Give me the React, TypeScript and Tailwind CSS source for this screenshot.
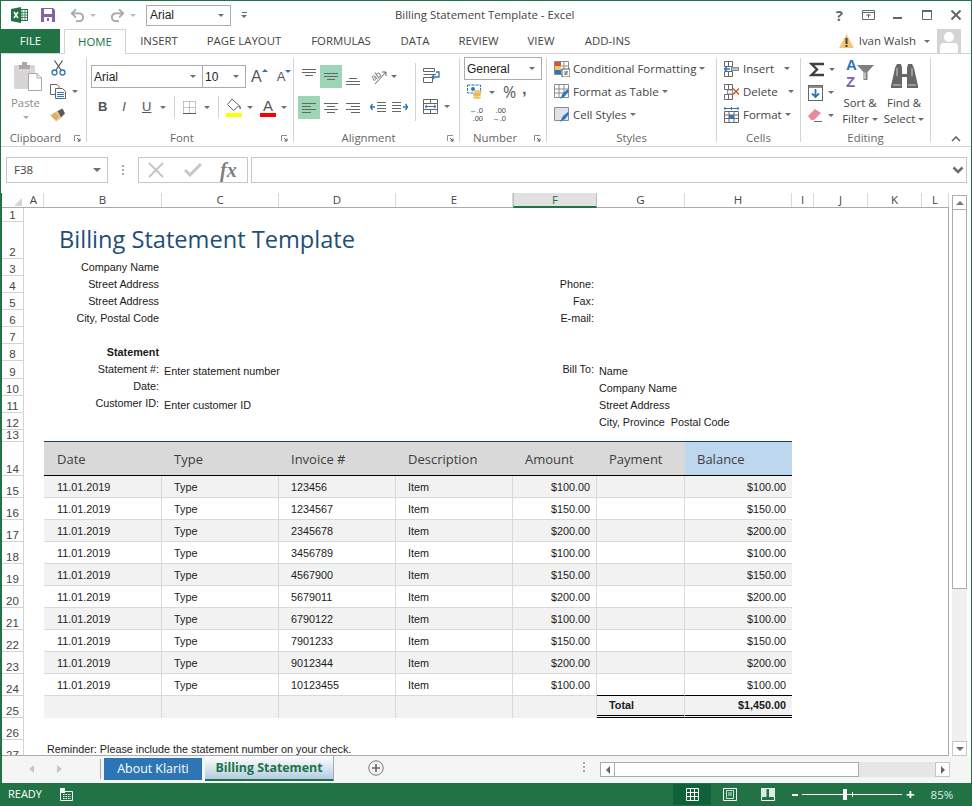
import { Redo2, Undo2 } from "lucide-react";
import type { ReactNode } from "react";

const cols =
  "grid grid-cols-[22px_20px_118px_117px_117px_117px_84px_88px_107px_22px_54px_54px_27px]";

function Caret({ className = "" }: { className?: string }) {
  return (
    <span
      className={`inline-block h-0 w-0 shrink-0 border-x-[3px] border-t-[3px] border-x-transparent border-t-[#6e6e6e] ${className}`}
    />
  );
}

function Lines({ rows, w = 14, h = 14, color = "#666" }: { rows: [number, number, number][]; w?: number; h?: number; color?: string }) {
  return (
    <svg width={w} height={h} viewBox={`0 0 ${w} ${h}`} className="shrink-0">
      {rows.map(([y, a, b]) => (
        <path key={`${y}-${a}`} d={`M${a} ${y + 0.5}H${b}`} stroke={color} />
      ))}
    </svg>
  );
}

function ExcelLogo() {
  return (
    <svg width="17" height="16" viewBox="0 0 17 16" className="shrink-0">
      <rect x="8.5" y="2.5" width="8" height="11" fill="#fff" stroke="#217346" />
      <path d="M11 2.5v11M14 2.5v11M8.5 5.5h8M8.5 8h8M8.5 10.5h8" stroke="#217346" strokeWidth="0.8" />
      <path d="M0 2L10 0V16L0 14Z" fill="#217346" />
      <path d="M3 5L7 11M7 5L3 11" stroke="#fff" strokeWidth="1.5" />
    </svg>
  );
}

function SaveIcon() {
  return (
    <svg width="14" height="14" viewBox="0 0 14 14" className="shrink-0">
      <path d="M0 0H12L14 2V14H0Z" fill="#8261ab" />
      <rect x="3" y="1" width="8" height="5" fill="#fff" />
      <rect x="3" y="9" width="8" height="5" fill="#fff" />
      <rect x="6" y="10" width="2" height="3" fill="#8261ab" />
    </svg>
  );
}

function PasteIcon() {
  return (
    <svg width="28" height="29" viewBox="0 0 28 29" className="shrink-0">
      <rect x="0" y="3" width="21" height="24" rx="1.5" fill="#d8d5d6" />
      <path d="M5 7V3H8V0H13V3H16V7Z" fill="#a9a7a8" />
      <path d="M14.5 11.5H23L27.5 16V28.5H14.5Z" fill="#fff" stroke="#a9a7a8" />
      <path d="M23 11.5V16H27.5" fill="none" stroke="#a9a7a8" />
    </svg>
  );
}

function ScissorsIcon() {
  return (
    <svg width="15" height="16" viewBox="0 0 15 16" className="shrink-0">
      <path d="M5 10L11.5 0.5M10 10L3.5 0.5" stroke="#595959" strokeWidth="1.3" />
      <circle cx="3.5" cy="12.5" r="2.5" fill="none" stroke="#2f75b5" strokeWidth="1.3" />
      <circle cx="11.5" cy="12.5" r="2.5" fill="none" stroke="#2f75b5" strokeWidth="1.3" />
    </svg>
  );
}

function CopyIcon() {
  return (
    <svg width="16" height="15" viewBox="0 0 16 15" className="shrink-0">
      <path d="M0.5 0.5H7L9 2.5V10.5H0.5Z" fill="#fff" stroke="#666" />
      <path d="M5.5 4.5H12.5L15.5 7.5V14.5H5.5Z" fill="#fff" stroke="#666" />
      <path d="M7 8.5H14M7 10.5H14M7 12.5H14" stroke="#2f75b5" />
    </svg>
  );
}

function BrushIcon() {
  return (
    <svg width="17" height="14" viewBox="0 0 17 14" className="shrink-0">
      <path d="M0 7L7 3L11 10L6 13.5Z" fill="#e9bd7c" />
      <path d="M2 8L7 11M4 6L8 9" stroke="#c9954d" />
      <path d="M7.5 3L12.5 0.5L15 5.5L11 9.5Z" fill="#595959" />
    </svg>
  );
}

function BorderIcon() {
  return (
    <svg width="13" height="13" viewBox="0 0 13 13" className="shrink-0">
      <path d="M0.5 0.5H12.5V12.5M0.5 0.5V12.5M6.5 0.5V12.5M0.5 6.5H12.5" fill="none" stroke="#8c8c8c" strokeDasharray="1 1" />
      <path d="M0 12.5H13" stroke="#595959" />
    </svg>
  );
}

function FillIcon() {
  return (
    <svg width="16" height="19" viewBox="0 0 16 19" className="shrink-0">
      <path d="M6 1L13 7.5L7.5 12.5L1.5 6.5Z" fill="#fff" stroke="#666" />
      <path d="M13 7C15 9 15.5 10 14.5 11C13.5 11.5 13 10 13 7Z" fill="#2f75b5" />
      <rect x="0" y="15" width="16" height="4" fill="#ffff00" />
    </svg>
  );
}

function OrientationIcon() {
  return (
    <svg width="19" height="18" viewBox="0 0 19 18" className="shrink-0">
      <text x="1" y="11" fontSize="9" fill="#666" transform="rotate(-35 6 8)" fontFamily="Liberation Sans">ab</text>
      <path d="M5 16L16 4M16 4H12M16 4V8" fill="none" stroke="#666" />
    </svg>
  );
}

function IndentIcon({ flip = false }: { flip?: boolean }) {
  return (
    <svg width="16" height="12" viewBox="0 0 16 12" className={`shrink-0 ${flip ? "-scale-x-100" : ""}`}>
      <path d="M7 0.5H16M7 3.5H16M7 6.5H16M7 9.5H16M0 11.5H0" stroke="#666" />
      <path d="M0 5H5M2.5 2L0.5 5L2.5 8" fill="none" stroke="#2f75b5" strokeWidth="1.4" />
    </svg>
  );
}

function WrapIcon() {
  return (
    <svg width="17" height="16" viewBox="0 0 17 16" className="shrink-0">
      <path d="M0.5 0.5H11.5V3.5H0.5ZM0.5 9.5H9.5V14.5H0.5Z" fill="#fff" stroke="#666" />
      <path d="M0.5 6.5H13" stroke="#666" />
      <path d="M13 4H16V9H9M11 7L9 9L11 11" fill="none" stroke="#2f75b5" strokeWidth="1.3" />
    </svg>
  );
}

function MergeIcon() {
  return (
    <svg width="15" height="15" viewBox="0 0 15 15" className="shrink-0">
      <path d="M0.5 0.5H14.5V14.5H0.5ZM0.5 4.5H14.5M0.5 10.5H14.5M7.5 0.5V4.5M7.5 10.5V14.5" fill="#fff" stroke="#666" />
      <path d="M2 7.5H13M4 5.8L2 7.5L4 9.2M11 5.8L13 7.5L11 9.2" fill="none" stroke="#2f75b5" />
    </svg>
  );
}

function AccountingIcon() {
  return (
    <svg width="16" height="16" viewBox="0 0 16 16" className="shrink-0">
      <rect x="0.5" y="1" width="13" height="8" fill="#fff" stroke="#2f75b5" strokeDasharray="3 1" />
      <circle cx="6" cy="5" r="2" fill="#2f75b5" />
      <ellipse cx="11" cy="7.5" rx="4" ry="1.5" fill="#f2c76e" />
      <ellipse cx="10" cy="10.5" rx="4" ry="1.5" fill="#eeb44f" />
      <ellipse cx="10" cy="13.5" rx="4" ry="1.5" fill="#f2c76e" />
    </svg>
  );
}

function StyleIcon({ kind }: { kind: "cond" | "table" | "cell" }) {
  return (
    <svg width="16" height="16" viewBox="0 0 16 16" className="shrink-0">
      <path d="M0.5 0.5H14.5V13.5H0.5Z" fill={kind === "cell" ? "#dfe3ea" : "#fff"} stroke="#8c8c8c" />
      {kind !== "cell" && <path d="M5 0.5V13.5M10 0.5V13.5M0.5 5H14.5M0.5 9H14.5" stroke="#8c8c8c" />}
      {kind === "cond" && (
        <>
          <rect x="1" y="1" width="6" height="4" fill="#d9552c" />
          <rect x="1" y="5" width="6" height="4" fill="#f2c76e" />
          <rect x="1" y="9" width="6" height="4" fill="#2f75b5" />
          <rect x="8" y="8" width="8" height="8" fill="#fff" stroke="#595959" />
          <path d="M10 11H14M10 13H14M13 10L11 14" stroke="#595959" strokeWidth="0.8" />
        </>
      )}
      {kind !== "cond" && <path d="M6 15L9 9L14 5L15 7L11 12Z" fill="#2f75b5" />}
    </svg>
  );
}

function CellsIcon({ kind }: { kind: "insert" | "delete" | "format" }) {
  if (kind === "format") {
    return (
      <svg width="15" height="16" viewBox="0 0 15 16" className="shrink-0">
        <path d="M0 1.5H15M1 0V3M7.5 0V3M14 0V3" stroke="#2f75b5" />
        <path d="M0.5 4.5H14.5V15.5H0.5ZM0.5 8H14.5M0.5 11.5H14.5M5 4.5V15.5M10 4.5V15.5" fill="#fff" stroke="#666" />
        <rect x="5" y="8" width="5" height="4" fill="#2f75b5" />
      </svg>
    );
  }
  return (
    <svg width="15" height="16" viewBox="0 0 15 16" className="shrink-0">
      <path d="M0.5 0.5H8.5V5.5H0.5ZM0.5 10.5H8.5V15.5H0.5ZM4.5 0.5V5.5M4.5 10.5V15.5" fill="#fff" stroke="#666" />
      {kind === "insert" ? (
        <>
          <path d="M0 8H6M3 5.5L0.5 8L3 10.5" fill="none" stroke="#2f75b5" strokeWidth="1.3" />
          <rect x="7.5" y="6.5" width="7" height="3" fill="#a9c4e4" stroke="#8c8c8c" />
        </>
      ) : (
        <>
          <rect x="3.5" y="6" width="5" height="4" fill="#fff" stroke="#8c8c8c" />
          <path d="M9 4.5L15 10.5M15 4.5L9 10.5" stroke="#d9552c" strokeWidth="1.5" />
        </>
      )}
    </svg>
  );
}

function SigmaIcon() {
  return (
    <svg width="16" height="15" viewBox="0 0 16 15" className="shrink-0">
      <path d="M16 2H3.5L9 7.5L3.5 13H16" fill="none" stroke="#404040" strokeWidth="2.4" />
    </svg>
  );
}

function FillDownIcon() {
  return (
    <svg width="15" height="16" viewBox="0 0 15 16" className="shrink-0">
      <rect x="0.5" y="0.5" width="14" height="15" fill="#fff" stroke="#666" />
      <rect x="1" y="1" width="13" height="2" fill="#8c8c8c" />
      <path d="M7.5 4V12M4 8.5L7.5 12L11 8.5" fill="none" stroke="#2f75b5" strokeWidth="1.8" />
    </svg>
  );
}

function EraserIcon() {
  return (
    <svg width="15" height="13" viewBox="0 0 15 13" className="shrink-0">
      <path d="M0 7L7 0L13 4L6 11H3Z" fill="#ec8a9b" />
      <path d="M6 12.5H14" stroke="#666" />
    </svg>
  );
}

function FunnelIcon() {
  return (
    <svg width="17" height="15" viewBox="0 0 17 15" className="shrink-0">
      <path d="M0 0H17L10.5 7V15H6.5V7Z" fill="#808080" />
      <path d="M8 7.5V14" stroke="#fff" strokeWidth="1" />
    </svg>
  );
}

function BinocularsIcon() {
  return (
    <svg width="27" height="24" viewBox="0 0 27 24" className="shrink-0">
      <path d="M4 4L6 0H10L11 4V10H16V4L17 0H21L23 4L27 22V24H16V13H11V24H0V22Z" fill="#666" />
      <path d="M2 21H10M17 21H25M6 4V12M21 4V12" stroke="#fff" strokeWidth="0.7" />
    </svg>
  );
}

function WarningIcon() {
  return (
    <svg width="15" height="14" viewBox="0 0 15 14" className="shrink-0">
      <path d="M7.5 0L15 14H0Z" fill="#f3c777" />
      <rect x="6.5" y="4" width="2" height="6" fill="#404040" />
      <rect x="6.5" y="11" width="2" height="2" fill="#404040" />
    </svg>
  );
}

function Launcher() {
  return (
    <svg width="7" height="7" viewBox="0 0 7 7" className="absolute right-[5px] top-[3px]">
      <path d="M0.5 6V0.5H6" fill="none" stroke="#8c8c8c" />
      <path d="M3 3L6 6M6 3.5V6H3.5" fill="none" stroke="#595959" />
    </svg>
  );
}

function Group({ label, launcher, className, children }: { label: string; launcher?: boolean; className: string; children: ReactNode }) {
  return (
    <div className={`flex h-[84px] shrink-0 flex-col border-r border-[#d4d4d4] ${className}`}>
      <div className="flex-1">{children}</div>
      <div className={`relative mb-[-2px] h-[12px] text-center text-[11.4px] leading-[12px] text-[#666] ${launcher ? "pr-[16px]" : ""}`}>
        {label}
        {launcher && <Launcher />}
      </div>
    </div>
  );
}

function DropBox({ text, className }: { text: string; className: string }) {
  return (
    <div className={`flex items-center justify-between border border-[#ababab] bg-white pl-[2px] pr-[6px] text-[12px] text-[#222] ${className}`}>
      <span className="font-['Liberation_Sans',sans-serif]">{text}</span>
      <Caret />
    </div>
  );
}

function TitleBar() {
  return (
    <div className="flex h-[28px] shrink-0 items-center">
      <span className="ml-[10px]"><ExcelLogo /></span>
      <span className="ml-[13px]"><SaveIcon /></span>
      <Undo2 size={17} strokeWidth={2.6} className="ml-[14px] text-[#a6a6a6]" />
      <Caret className="ml-[4px] border-t-[#bbb]" />
      <Redo2 size={17} strokeWidth={2.6} className="ml-[13px] text-[#a6a6a6]" />
      <Caret className="ml-[4px] border-t-[#bbb]" />
      <DropBox text="Arial" className="ml-[10px] h-[21px] w-[85px] pl-[3px]" />
      <span className="ml-[10px] flex flex-col items-center gap-[2px]">
        <span className="h-px w-[5px] bg-[#666]" />
        <Caret />
      </span>
      <span className="ml-[148px] whitespace-nowrap text-[11.4px] text-[#444]">Billing Statement Template - Excel</span>
      <div className="ml-auto mr-[10px] flex items-center">
        <span className="text-[15px] font-bold leading-none text-[#666]">?</span>
        <svg width="13" height="10" viewBox="0 0 13 10" className="ml-[19px]">
          <path d="M0.5 0.5H12.5V9.5H0.5ZM0.5 2.5H12.5M6.5 8V4M4.5 6L6.5 4L8.5 6" fill="none" stroke="#666" />
        </svg>
        <span className="ml-[18px] mt-[5px] h-[2px] w-[9px] bg-[#666]" />
        <svg width="10" height="10" viewBox="0 0 10 10" className="ml-[20px]">
          <path d="M0.5 0.5H9.5V9.5H0.5Z" fill="none" stroke="#666" />
          <path d="M0 1H10" stroke="#666" strokeWidth="2" />
        </svg>
        <svg width="10" height="10" viewBox="0 0 10 10" className="ml-[19px]">
          <path d="M0.5 0.5L9.5 9.5M9.5 0.5L0.5 9.5" stroke="#666" strokeWidth="2" />
        </svg>
      </div>
    </div>
  );
}

function TabRow() {
  return (
    <div className="flex h-[25px] shrink-0 items-stretch border-b border-[#d4d4d4] text-[11.4px] text-[#444]">
      <div className="flex w-[59px] items-center justify-center bg-[#217346] text-white">FILE</div>
      <div className="z-10 ml-[4px] mb-[-1px] flex w-[62px] items-center justify-center border-x border-t border-[#d4d4d4] bg-white text-[#217346]">HOME</div>
      <div className="flex w-[66px] items-center justify-center">INSERT</div>
      <div className="flex w-[104px] items-center justify-center">PAGE LAYOUT</div>
      <div className="flex w-[90px] items-center justify-center">FORMULAS</div>
      <div className="flex w-[58px] items-center justify-center">DATA</div>
      <div className="flex w-[69px] items-center justify-center">REVIEW</div>
      <div className="flex w-[56px] items-center justify-center">VIEW</div>
      <div className="flex w-[77px] items-center justify-center">ADD-INS</div>
      <div className="ml-auto mr-[10px] flex items-center">
        <WarningIcon />
        <span className="ml-[5px] whitespace-nowrap">Ivan Walsh</span>
        <Caret className="ml-[8px]" />
        <div className="ml-[7px] flex h-[24px] w-[24px] flex-col items-center justify-end overflow-hidden bg-[#d4d4d4]">
          <span className="mb-[1px] h-[10px] w-[10px] rounded-full bg-white" />
          <span className="h-[10px] w-[18px] rounded-t-[4px] bg-white" />
        </div>
      </div>
    </div>
  );
}

function Ribbon() {
  return (
    <div className="flex h-[93px] shrink-0 items-start border-b border-[#d4d4d4] pt-[4px] text-[#444]">
      <Group label="Clipboard" launcher className="w-[86px]">
        <div className="flex">
          <div className="flex w-[49px] flex-col items-center pt-[4px]">
            <span className="ml-[4px]"><PasteIcon /></span>
            <span className="mt-[5px] text-[11.4px] leading-[14px] text-[#8c8c8c]">Paste</span>
            <Caret className="mt-[6px] border-t-[#aaa]" />
          </div>
          <div className="flex flex-col pt-[2px]">
            <span className="ml-[1px]"><ScissorsIcon /></span>
            <span className="mt-[8px] flex items-center">
              <CopyIcon />
              <Caret className="ml-[6px]" />
            </span>
            <span className="mt-[9px]"><BrushIcon /></span>
          </div>
        </div>
      </Group>

      <Group label="Font" launcher className="w-[207px]">
        <div className="mt-[7px] flex h-[23px] items-center pl-[4px]">
          <DropBox text="Arial" className="h-[23px] w-[112px]" />
          <DropBox text="10" className="-ml-px h-[23px] w-[44px]" />
          <span className="ml-[5px] flex items-start font-['Liberation_Sans',sans-serif] text-[16px] leading-none text-[#555]">
            A<span className="h-0 w-0 border-x-[3px] border-b-[3px] border-x-transparent border-b-[#2f75b5]" />
          </span>
          <span className="ml-[9px] flex items-start font-['Liberation_Sans',sans-serif] text-[13px] leading-none text-[#555]">
            A<span className="h-0 w-0 border-x-[3px] border-t-[3px] border-x-transparent border-t-[#2f75b5]" />
          </span>
        </div>
        <div className="mt-[8px] flex h-[22px] items-center pl-[11px] font-['Liberation_Sans',sans-serif] text-[13px] text-[#555]">
          <span className="w-[8px] text-center font-bold">B</span>
          <span className="ml-[14px] w-[8px] text-center italic">I</span>
          <span className="ml-[14px] w-[8px] text-center underline">U</span>
          <Caret className="ml-[10px]" />
          <span className="ml-[8px] h-[22px] w-px bg-[#d4d4d4]" />
          <span className="ml-[8px]"><BorderIcon /></span>
          <Caret className="ml-[8px]" />
          <span className="ml-[8px] h-[22px] w-px bg-[#d4d4d4]" />
          <span className="ml-[7px]"><FillIcon /></span>
          <Caret className="ml-[5px]" />
          <span className="ml-[7px] flex w-[16px] flex-col items-center text-[15px] leading-[15px]">
            A
            <span className="h-[4px] w-[16px] bg-[#ff0000]" />
          </span>
          <Caret className="ml-[5px]" />
        </div>
      </Group>

      <Group label="Alignment" launcher className="w-[166px]">
        <div className="flex pl-[4px]">
          <div className="mt-[7px] flex flex-col gap-[8px]">
            <div className="flex h-[23px] items-center">
              <span className="flex h-[23px] w-[22px] items-start justify-center pt-[4px]"><Lines rows={[[0, 0, 14], [3, 0, 14], [6, 3, 11]]} /></span>
              <span className="flex h-[23px] w-[22px] items-center justify-center bg-[#9fd5b7]"><Lines h={9} rows={[[1, 0, 14], [4, 0, 14], [7, 3, 11]]} /></span>
              <span className="flex h-[23px] w-[22px] items-end justify-center pb-[3px]"><Lines h={8} rows={[[1, 3, 11], [4, 0, 14], [7, 0, 14]]} /></span>
              <span className="ml-[6px]"><OrientationIcon /></span>
              <Caret className="ml-[2px]" />
            </div>
            <div className="flex h-[23px] items-center">
              <span className="flex h-[23px] w-[22px] items-center justify-center bg-[#9fd5b7]"><Lines h={11} rows={[[1, 0, 14], [4, 0, 9], [7, 0, 14], [10, 0, 9]]} /></span>
              <span className="flex h-[23px] w-[22px] items-center justify-center"><Lines h={11} rows={[[1, 0, 14], [4, 3, 11], [7, 0, 14], [10, 3, 11]]} /></span>
              <span className="flex h-[23px] w-[22px] items-center justify-center"><Lines h={11} rows={[[1, 0, 14], [4, 5, 14], [7, 0, 14], [10, 5, 14]]} /></span>
              <span className="ml-[6px]"><IndentIcon /></span>
              <span className="ml-[6px]"><IndentIcon flip /></span>
            </div>
          </div>
          <span className="ml-[7px] mt-[5px] h-[58px] w-px bg-[#d4d4d4]" />
          <div className="ml-[7px] flex flex-col">
            <span className="mt-[10px]"><WrapIcon /></span>
            <span className="mt-[15px] flex items-center">
              <MergeIcon />
              <Caret className="ml-[6px]" />
            </span>
          </div>
        </div>
      </Group>

      <Group label="Number" launcher className="w-[87px]">
        <div className="pl-[4px]">
          <DropBox text="General" className="-mt-px h-[23px] w-[78px]" />
          <div className="mt-[4px] flex h-[16px] items-center pl-[3px]">
            <AccountingIcon />
            <Caret className="ml-[6px]" />
            <span className="ml-[8px] text-[16px] leading-none text-[#555]">%</span>
            <span className="ml-[6px] -mt-[8px] font-['Liberation_Sans',sans-serif] text-[15px] font-bold leading-none text-[#555]">,</span>
          </div>
          <div className="mt-[7px] flex h-[16px] items-center pl-[3px] font-['Liberation_Sans',sans-serif] text-[7.5px] leading-[8px] text-[#444]">
            <span className="flex w-[16px] flex-col items-end">
              <span><span className="text-[#2f75b5]">←</span>.0</span>
              <span>.00</span>
            </span>
            <span className="ml-[7px] flex w-[16px] flex-col items-end">
              <span>.00</span>
              <span><span className="text-[#2f75b5]">→</span>.0</span>
            </span>
          </div>
        </div>
      </Group>

      <Group label="Styles" className="w-[170px]">
        <div className="-mt-px pl-[7px] text-[11.5px]">
          <div className="flex h-[23px] items-center">
            <StyleIcon kind="cond" />
            <span className="ml-[3px] whitespace-nowrap">Conditional Formatting</span>
            <Caret className="ml-[3px]" />
          </div>
          <div className="flex h-[23px] items-center">
            <StyleIcon kind="table" />
            <span className="ml-[3px] whitespace-nowrap">Format as Table</span>
            <Caret className="ml-[3px]" />
          </div>
          <div className="flex h-[23px] items-center">
            <StyleIcon kind="cell" />
            <span className="ml-[3px] whitespace-nowrap">Cell Styles</span>
            <Caret className="ml-[3px]" />
          </div>
        </div>
      </Group>

      <Group label="Cells" className="w-[84px]">
        <div className="-mt-px pl-[7px] text-[11.5px]">
          <div className="flex h-[23px] items-center">
            <CellsIcon kind="insert" />
            <span className="ml-[4px] w-[36px]">Insert</span>
            <Caret className="ml-[5px]" />
          </div>
          <div className="flex h-[23px] items-center">
            <CellsIcon kind="delete" />
            <span className="ml-[4px] w-[37px]">Delete</span>
            <Caret className="ml-[8px]" />
          </div>
          <div className="flex h-[23px] items-center">
            <CellsIcon kind="format" />
            <span className="ml-[4px]">Format</span>
            <Caret className="ml-[3px]" />
          </div>
        </div>
      </Group>

      <Group label="Editing" className="w-[130px]">
        <div className="flex text-[11.4px]">
          <div className="w-[37px] pl-[7px]">
            <div className="flex h-[23px] items-center"><SigmaIcon /><Caret className="ml-[5px]" /></div>
            <div className="flex h-[23px] items-center"><FillDownIcon /><Caret className="ml-[5px]" /></div>
            <div className="flex h-[23px] items-center"><EraserIcon /><Caret className="ml-[5px]" /></div>
          </div>
          <div className="flex w-[44px] flex-col items-center pt-[4px]">
            <div className="flex h-[28px] items-end">
              <span className="flex flex-col font-['Liberation_Sans',sans-serif] text-[15px] font-bold leading-[17px]">
                <span className="text-[#2f75b5]">A</span>
                <span className="text-[#8261ab]">Z</span>
              </span>
              <span className="mb-[10px]"><FunnelIcon /></span>
            </div>
            <span className="mt-[5px] whitespace-nowrap leading-[16px]">Sort &amp;</span>
            <span className="flex items-center whitespace-nowrap leading-[16px]">Filter<Caret className="ml-[3px]" /></span>
          </div>
          <div className="flex w-[44px] flex-col items-center pt-[4px]">
            <div className="flex h-[28px] items-center"><BinocularsIcon /></div>
            <span className="mt-[5px] whitespace-nowrap leading-[16px]">Find &amp;</span>
            <span className="flex items-center whitespace-nowrap leading-[16px]">Select<Caret className="ml-[3px]" /></span>
          </div>
        </div>
      </Group>

      <svg width="10" height="6" viewBox="0 0 10 6" className="ml-[20px] mt-[78px]">
        <path d="M1 5L5 1L9 5" fill="none" stroke="#666" strokeWidth="1.6" />
      </svg>
    </div>
  );
}

function FormulaBar() {
  return (
    <div className="mt-[10px] flex h-[26px] shrink-0 items-stretch pl-[5px] pr-[4px]">
      <div className="flex w-[102px] items-center justify-between border border-[#c6c6c6] pl-[7px] pr-[6px] text-[11.5px] text-[#444]">
        F38
        <Caret className="border-x-[4px] border-t-[4px]" />
      </div>
      <div className="ml-[14px] flex w-[2px] flex-col justify-center gap-[2px]">
        <span className="h-[2px] w-[2px] bg-[#aaa]" />
        <span className="h-[2px] w-[2px] bg-[#aaa]" />
        <span className="h-[2px] w-[2px] bg-[#aaa]" />
      </div>
      <div className="ml-[14px] flex w-[110px] items-center border border-[#c6c6c6]">
        <svg width="16" height="16" viewBox="0 0 16 16" className="ml-[9px]">
          <path d="M1 1L15 15M15 1L1 15" stroke="#c8c8c8" strokeWidth="2.2" />
        </svg>
        <svg width="18" height="14" viewBox="0 0 18 14" className="ml-[20px]">
          <path d="M1 7L6 12L17 1" fill="none" stroke="#c8c8c8" strokeWidth="3" />
        </svg>
        <span className="ml-[18px] font-['Liberation_Serif',serif] text-[20px] font-bold italic leading-none text-[#7f7f7f]">fx</span>
      </div>
      <div className="ml-[3px] flex flex-1 items-center justify-end border border-[#c6c6c6] pr-[2px]">
        <svg width="12" height="8" viewBox="0 0 12 8">
          <path d="M1.5 1.5L6 6L10.5 1.5" fill="none" stroke="#6e6e6e" strokeWidth="2.6" />
        </svg>
      </div>
    </div>
  );
}

function RowNum({ n }: { n: number }) {
  return (
    <div className="flex items-end justify-center border-b border-r border-[#d4d4d4] text-[11.5px] leading-[12px] text-[#444]">
      {n}
    </div>
  );
}

const letters = ["A", "B", "C", "D", "E", "F", "G", "H", "I", "J", "K", "L"];

function ColumnHeader() {
  return (
    <div className={`${cols} h-[15px] shrink-0 border-b border-[#ababab]`}>
      <div className="flex items-end justify-end pb-px pr-[2px]">
        <span className="h-0 w-0 border-b-[8px] border-l-[8px] border-b-[#d4d4d4] border-l-transparent" />
      </div>
      {letters.map((l) => (
        <div
          key={l}
          className={
            l === "F"
              ? "mb-[-1px] flex items-center justify-center border-b-2 border-x border-x-[#bdbdbd] border-b-[#217346] bg-[#e1e1e1] text-[11.5px] leading-none text-[#217346]"
              : "flex items-center justify-center border-r border-[#d9d9d9] text-[11.5px] leading-none text-[#444]"
          }
        >
          {l}
        </div>
      ))}
    </div>
  );
}

interface InfoRow {
  n: number;
  h: string;
  left?: string;
  bold?: boolean;
  value?: string;
  rightLabel?: string;
  rightValue?: string;
}

const topRows: InfoRow[] = [
  { n: 3, h: "h-[17px]", left: "Company Name" },
  { n: 4, h: "h-[17px]", left: "Street Address", rightLabel: "Phone:" },
  { n: 5, h: "h-[17px]", left: "Street Address", rightLabel: "Fax:" },
  { n: 6, h: "h-[17px]", left: "City, Postal Code", rightLabel: "E-mail:" },
  { n: 7, h: "h-[17px]" },
  { n: 8, h: "h-[17px]", left: "Statement", bold: true },
  { n: 9, h: "h-[17px]", left: "Statement #:", value: "Enter statement number", rightLabel: "Bill To:", rightValue: "Name" },
  { n: 10, h: "h-[17px]", left: "Date:", rightValue: "Company Name" },
  { n: 11, h: "h-[17px]", left: "Customer ID:", value: "Enter customer ID", rightValue: "Street Address" },
  { n: 12, h: "h-[17px]", rightValue: "City, Province  Postal Code" },
];

const invoices = ["123456", "1234567", "2345678", "3456789", "4567900", "5679011", "6790122", "7901233", "9012344", "10123455"];
const amounts = ["$100.00", "$150.00", "$200.00"];

function SheetRows() {
  return (
    <div className="flex-1 overflow-hidden font-['Liberation_Sans',Arial,sans-serif] text-[10.8px] text-[#1a1a1a]">
      <div className={`${cols} h-[14px]`}>
        <RowNum n={1} />
      </div>
      <div className={`${cols} h-[37px]`}>
        <RowNum n={2} />
        <div />
        <div className="whitespace-nowrap pl-[15px] pt-[2px] font-['Open_Sans',sans-serif] text-[23.6px] leading-[30px] text-[#1f4e79]">
          Billing Statement Template
        </div>
      </div>
      {topRows.map((r) => (
        <div key={r.n} className={`${cols} ${r.h}`}>
          <RowNum n={r.n} />
          <div />
          <div className={`whitespace-nowrap pr-[3px] text-right leading-[16px] ${r.bold ? "font-bold" : ""}`}>{r.left}</div>
          <div className="whitespace-pre pl-[2px] pt-[2px] leading-[16px]">{r.value}</div>
          <div />
          <div />
          <div className="whitespace-nowrap pr-[3px] text-right leading-[16px]">{r.rightLabel}</div>
          <div className="whitespace-pre pl-[2px] pt-[2px] leading-[16px]">{r.rightValue}</div>
        </div>
      ))}
      <div className={`${cols} h-[12px]`}>
        <RowNum n={13} />
      </div>
      <div className={`${cols} h-[35px]`}>
        <RowNum n={14} />
        <div />
        <div className="flex items-center border-b border-t border-b-black border-t-[#1f3f60] bg-[#d9d9d9] pl-[13px] pt-[2px] font-['Open_Sans',sans-serif] text-[13px] text-[#404040]">
          Date
        </div>
        {["Type", "Invoice #", "Description", "Amount", "Payment"].map((t) => (
          <div
            key={t}
            className="flex items-center border-b border-t border-b-black border-t-[#1f3f60] bg-[#d9d9d9] pl-[12px] pt-[2px] font-['Open_Sans',sans-serif] text-[13px] text-[#404040]"
          >
            {t}
          </div>
        ))}
        <div className="flex items-center border-b border-t border-b-black border-t-[#1f3f60] bg-[#bdd7ee] pl-[12px] pt-[2px] font-['Open_Sans',sans-serif] text-[13px] text-[#404040]">
          Balance
        </div>
      </div>
      {invoices.map((inv, i) => {
        const bg = i % 2 === 0 ? "bg-[#f2f2f2]" : "bg-white";
        const amount = amounts[i % 3];
        const last = i === invoices.length - 1;
        return (
          <div key={inv} className={`${cols} h-[22px]`}>
            <RowNum n={15 + i} />
            <div />
            <div className={`flex items-center border-b border-r border-[#d9d9d9] pl-[13px] pt-px ${bg}`}>11.01.2019</div>
            <div className={`flex items-center border-b border-r border-[#d9d9d9] pl-[12px] pt-px ${bg}`}>Type</div>
            <div className={`flex items-center border-b border-r border-[#d9d9d9] pl-[12px] pt-px ${bg}`}>{inv}</div>
            <div className={`flex items-center border-b border-r border-[#d9d9d9] pl-[12px] pt-px ${bg}`}>Item</div>
            <div className={`flex items-center justify-end border-b border-r border-[#d9d9d9] pr-[6px] pt-px ${bg}`}>{amount}</div>
            <div className={`border-b border-r ${last ? "border-b-black border-r-[#d9d9d9]" : "border-[#d9d9d9]"} ${bg}`} />
            <div className={`flex items-center justify-end border-b pr-[6px] pt-px ${last ? "border-black" : "border-[#d9d9d9]"} ${bg}`}>{amount}</div>
          </div>
        );
      })}
      <div className={`${cols} h-[22px]`}>
        <RowNum n={25} />
        <div />
        <div className="border-r border-[#d9d9d9] bg-[#f2f2f2]" />
        <div className="border-r border-[#d9d9d9] bg-[#f2f2f2]" />
        <div className="border-r border-[#d9d9d9] bg-[#f2f2f2]" />
        <div className="border-r border-[#d9d9d9] bg-[#f2f2f2]" />
        <div className="border-r border-[#d9d9d9] bg-[#f2f2f2]" />
        <div className="flex items-center border-b-[3px] border-r border-double border-b-black border-r-[#d9d9d9] bg-[#f2f2f2] pl-[12px] font-bold">Total</div>
        <div className="flex items-center justify-end border-b-[3px] border-double border-black bg-[#f2f2f2] pr-[6px] font-bold">$1,450.00</div>
      </div>
      <div className={`${cols} h-[22px]`}>
        <RowNum n={26} />
      </div>
      <div className={`${cols} h-[22px]`}>
        <RowNum n={27} />
        <div />
        <div className="col-span-5 whitespace-nowrap pl-[3px] pt-[2px] leading-[14px]">Reminder: Please include the statement number on your check.</div>
      </div>
    </div>
  );
}

function VerticalScroll() {
  return (
    <div className="ml-[3px] mr-[3px] mt-[2px] flex w-[15px] shrink-0 flex-col bg-[#f0f0f0]">
      <div className="flex h-[15px] items-center justify-center border border-[#ababab] bg-white">
        <span className="h-0 w-0 border-x-[4px] border-b-[4px] border-x-transparent border-b-[#777]" />
      </div>
      <div className="h-[379px] border-x border-b border-[#ababab] bg-white" />
      <div className="mt-auto flex h-[15px] items-center justify-center border border-[#c6c6c6] bg-white">
        <Caret className="border-x-[4px] border-t-[4px]" />
      </div>
    </div>
  );
}

function SheetTabs() {
  return (
    <div className="flex h-[27px] shrink-0 items-start border-l border-[#217346] bg-[#f5f5f5] text-[12.4px]">
      <span className="ml-[27px] mt-[9px] h-0 w-0 border-y-[4px] border-r-[5px] border-y-transparent border-r-[#c6c6c6]" />
      <span className="ml-[23px] mt-[9px] h-0 w-0 border-y-[4px] border-l-[5px] border-y-transparent border-l-[#c6c6c6]" />
      <span className="ml-[38px] mt-[3px] h-[20px] w-px bg-[#ababab]" />
      <div className="ml-[3px] mt-[2px] flex h-[22px] w-[98px] items-center justify-center bg-[#2e75b6] text-white">About Klariti</div>
      <div className="ml-[3px] flex h-[25px] w-[129px] items-center justify-center border-b-2 border-r border-b-[#217346] border-r-[#ababab] bg-gradient-to-b from-white to-[#b5cce3] pt-[2px] font-bold text-[#217346]">
        Billing Statement
      </div>
      <svg width="16" height="16" viewBox="0 0 16 16" className="ml-[34px] mt-[4px]">
        <circle cx="8" cy="8" r="7.2" fill="none" stroke="#777" />
        <path d="M4 8H12M8 4V12" stroke="#666" strokeWidth="1.6" />
      </svg>
      <div className="ml-[199px] mt-[6px] flex w-[2px] flex-col gap-[2px]">
        <span className="h-[2px] w-[2px] bg-[#aaa]" />
        <span className="h-[2px] w-[2px] bg-[#aaa]" />
        <span className="h-[2px] w-[2px] bg-[#aaa]" />
      </div>
      <div className="ml-[15px] mt-[6px] flex h-[15px] w-[350px] items-stretch bg-[#e6e6e6]">
        <div className="flex w-[15px] items-center justify-center border border-[#ababab] bg-white">
          <span className="h-0 w-0 border-y-[4px] border-r-[4px] border-y-transparent border-r-[#666]" />
        </div>
        <div className="w-[244px] border-y border-r border-[#ababab] bg-white" />
        <div className="ml-auto flex w-[15px] items-center justify-center border border-[#c6c6c6] bg-white">
          <span className="h-0 w-0 border-y-[4px] border-l-[4px] border-y-transparent border-l-[#666]" />
        </div>
      </div>
    </div>
  );
}

function StatusBar() {
  return (
    <div className="flex h-[23px] shrink-0 items-center bg-[#217346] pl-[7px] text-[11px] text-white">
      <span>READY</span>
      <svg width="13" height="13" viewBox="0 0 13 13" className="ml-[18px]">
        <path d="M0.5 3.5H12.5V12.5H0.5Z" fill="none" stroke="#fff" />
        <rect x="0" y="0" width="5" height="5" fill="#fff" />
        <path d="M3 6.5H11M3 8.5H11M3 10.5H11" stroke="#fff" strokeDasharray="1.5 1" />
      </svg>
      <div className="ml-[600px] flex h-[21px] w-[38px] items-center justify-center bg-[#0f6237]">
        <svg width="13" height="13" viewBox="0 0 13 13">
          <path d="M0.5 0.5H12.5V12.5H0.5ZM0.5 4.5H12.5M0.5 8.5H12.5M4.5 0.5V12.5M8.5 0.5V12.5" fill="none" stroke="#fff" />
        </svg>
      </div>
      <svg width="14" height="13" viewBox="0 0 14 13" className="ml-[12px]">
        <path d="M0.5 0.5H13.5V12.5H0.5Z" fill="none" stroke="#fff" />
        <path d="M3.5 2.5H10.5V10.5H3.5ZM5 5H9M5 7H9" fill="none" stroke="#fff" strokeWidth="0.8" />
      </svg>
      <svg width="14" height="13" viewBox="0 0 14 13" className="ml-[24px]">
        <path d="M0.5 0.5H13.5V12.5H0.5Z" fill="none" stroke="#fff" />
        <path d="M0 0H5.5V9H0ZM8 0H14V9H8Z" fill="#dcebe2" />
      </svg>
      <span className="ml-[17px] h-[2px] w-[6px] bg-white" />
      <div className="relative ml-[4px] h-px w-[100px] bg-white">
        <span className="absolute left-[41px] top-[-5px] h-[11px] w-[4px] bg-white" />
        <span className="absolute left-[50px] top-[-2px] h-[5px] w-px bg-white" />
      </div>
      <span className="ml-[4px] text-[15px] font-bold leading-none">+</span>
      <span className="ml-[16px] text-[11.5px] text-[#dcebe2]">85%</span>
    </div>
  );
}

export default function App() {
  return (
    <div className="flex h-[806px] w-[972px] flex-col overflow-hidden border-x border-t border-[#217346] bg-white font-['Open_Sans','Noto_Sans',sans-serif]">
      <TitleBar />
      <TabRow />
      <Ribbon />
      <FormulaBar />
      <div className="mt-[10px] flex h-[563px] shrink-0 border-l border-[#217346]">
        <div className="flex w-[947px] shrink-0 flex-col border-b border-r border-[#ababab]">
          <ColumnHeader />
          <SheetRows />
        </div>
        <VerticalScroll />
      </div>
      <SheetTabs />
      <StatusBar />
    </div>
  );
}
